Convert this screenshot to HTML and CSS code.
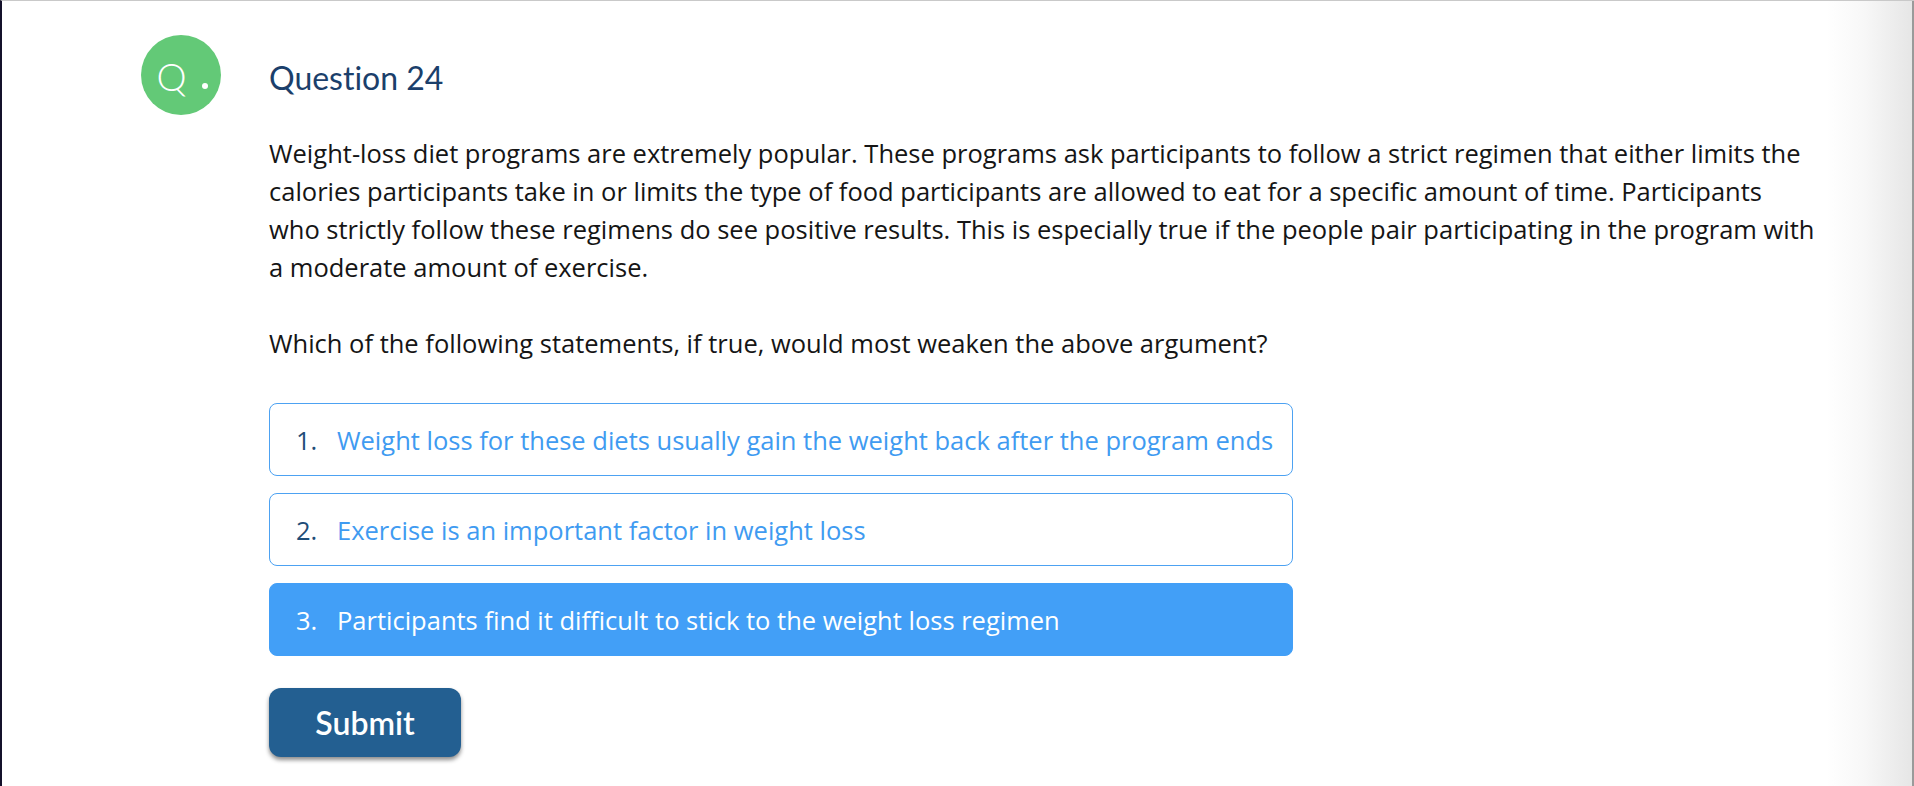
FILE: index.html
```html
<!DOCTYPE html>
<html lang="en">
<head>
<meta charset="utf-8">
<title>Question 24</title>
<link rel="stylesheet" href="styles.css">
</head>
<body>
<div class="frame">
  <main class="main">
    <header class="q-head">
      <div class="q-badge">Q<span class="q-dot"></span></div>
      <h1 class="q-title">Question 24</h1>
    </header>
    <section class="q-body">
      <p class="q-text">Weight-loss diet programs are extremely popular. These programs ask participants to follow a strict regimen that either limits the calories participants take in or limits the type of food participants are allowed to eat for a specific amount of time. Participants<br>who strictly follow these regimens do see positive results. This is especially true if the people pair participating in the program with a moderate amount of exercise.</p>
      <p class="q-prompt">Which of the following statements, if true, would most weaken the above argument?</p>
      <ol class="options">
        <li class="option"><span class="opt-num">1.</span><span class="opt-text">Weight loss for these diets usually gain the weight back after the program ends</span></li>
        <li class="option"><span class="opt-num">2.</span><span class="opt-text">Exercise is an important factor in weight loss</span></li>
        <li class="option selected"><span class="opt-num">3.</span><span class="opt-text">Participants find it difficult to stick to the weight loss regimen</span></li>
      </ol>
      <button class="submit" type="button">Submit</button>
    </section>
  </main>
  <div class="edge"></div>
</div>
</body>
</html>
```

FILE: styles.css
```css
* { box-sizing: border-box; }
html, body { margin: 0; padding: 0; background: #fff; }
body { font-family: "Open Sans", "Liberation Sans", sans-serif; color: #151515; }

.frame {
  display: flex;
  height: 786px;
  border-top: 1px solid #c9c9c9;
  border-left: 2px solid #14112b;
  overflow: hidden;
}

.main {
  flex: 1;
  padding: 34px 0 0 139px;
}

.edge {
  width: 87px;
  flex: none;
  background: linear-gradient(to right, #ffffff 0%, #f7f7f7 45%, #e6e6e6 100%);
  border-right: 2px solid #9a9a9a;
}

.q-head {
  display: flex;
  align-items: center;
  gap: 48px;
  height: 80px;
}

.q-badge {
  width: 80px;
  height: 80px;
  border-radius: 50%;
  background: #63c977;
  color: #fff;
  display: flex;
  align-items: center;
  justify-content: center;
  font-family: Lato, "Open Sans", sans-serif;
  font-weight: 300;
  font-size: 38px;
  line-height: 1;
  padding-left: 2px;
  padding-top: 1px;
}
.q-dot {
  width: 6px;
  height: 6px;
  border-radius: 50%;
  background: #fff;
  margin-left: 15px;
  align-self: center;
  margin-top: 21px;
}

.q-title {
  margin: 0;
  font-family: Lato, "Open Sans", sans-serif;
  font-weight: 400;
  font-size: 32px;
  color: #1b3f6b;
  padding-top: 4px;
  font-variant-ligatures: none;
  font-feature-settings: "liga" 0;
}

.q-body {
  padding-left: 128px;
  margin-top: 19px;
}

.q-text, .q-prompt {
  margin: 0;
  max-width: 1552px;
  font-size: 25.5px;
  line-height: 38px;
}
.q-prompt { margin-top: 38px; }

.options {
  list-style: none;
  margin: 41px 0 0;
  padding: 0;
  width: 1024px;
  display: flex;
  flex-direction: column;
  gap: 17px;
}

.option {
  display: flex;
  align-items: center;
  height: 73px;
  border: 1px solid #4da2f2;
  border-radius: 8px;
  padding: 0 0 0 26px;
  font-size: 25.5px;
}
.opt-num { width: 41px; flex: none; color: #1f4d78; }
.opt-text { color: #3f9bf1; }

.option.selected { background: #429ff7; border-color: #429ff7; }
.option.selected .opt-num,
.option.selected .opt-text { color: #fff; }

.submit {
  margin-top: 32px;
  width: 192px;
  height: 69px;
  border: none;
  border-radius: 12px;
  background: #235f91;
  color: #fff;
  font-family: Lato, "Open Sans", sans-serif;
  font-weight: 600;
  font-size: 32px;
  box-shadow: 0 3px 4px rgba(0, 0, 0, 0.45);
  padding: 0 0 0;
}
```
